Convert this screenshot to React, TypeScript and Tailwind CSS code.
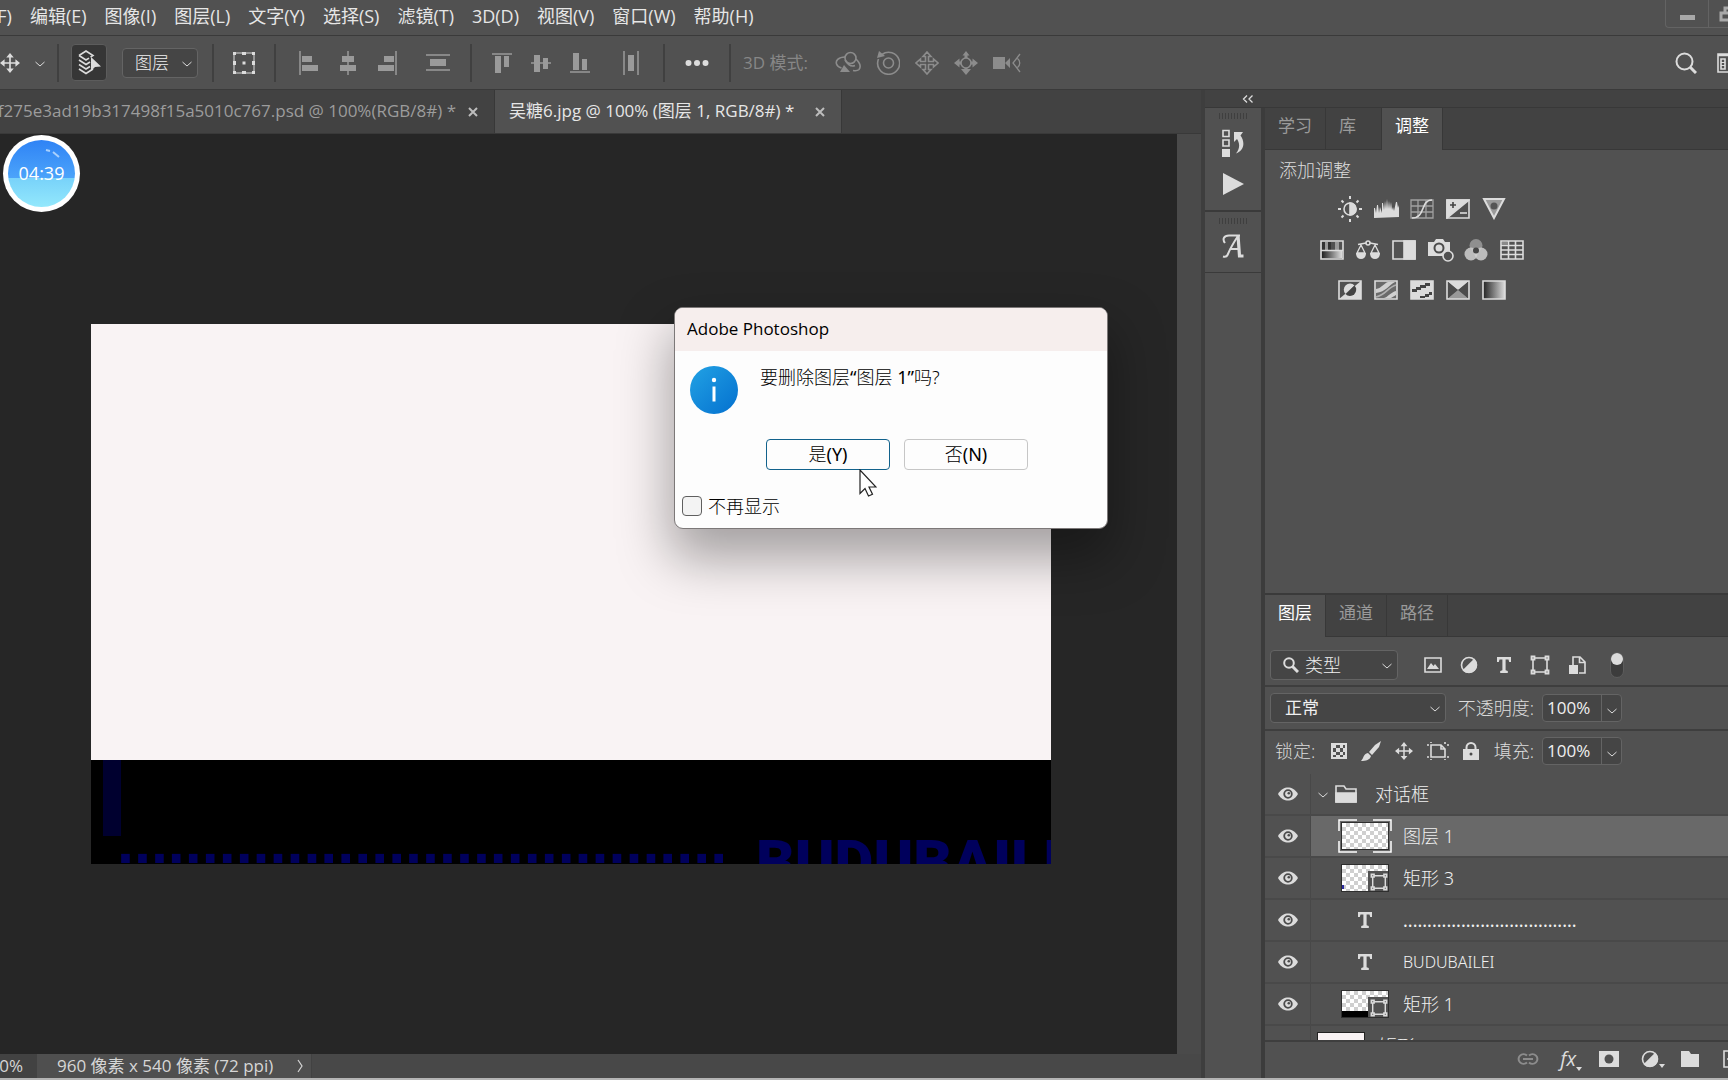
import React, { useState } from "react";

const menus = [
  "文件(F)",
  "编辑(E)",
  "图像(I)",
  "图层(L)",
  "文字(Y)",
  "选择(S)",
  "滤镜(T)",
  "3D(D)",
  "视图(V)",
  "窗口(W)",
  "帮助(H)",
];

type IconProps = { className?: string; children?: React.ReactNode; box?: string };

const Icon = ({ className = "w-6 h-6", children, box = "0 0 24 24" }: IconProps) => (
  <svg
    viewBox={box}
    className={`shrink-0 ${className}`}
    fill="none"
    stroke="currentColor"
    strokeWidth="1.6"
    aria-hidden="true"
  >
    {children}
  </svg>
);

const Chevron = () => (
  <Icon className="w-3 h-3 pointer-events-none" box="0 0 12 12">
    <path d="M1.5 5l4.5 4L10.5 5" strokeWidth="1" />
  </Icon>
);

const MoveIcon = ({ className = "w-6 h-6" }) => (
  <Icon className={className}>
    <path d="M12 4v16M4 12h16" strokeWidth="2" />
    <path
      d="M12 0l4.5 5.500h-9zM12 24l4.500-5.500h-9zM0 12l5.500-4.500v9zM24 12l-5.500-4.500v9z"
      fill="currentColor"
      stroke="none"
    />
  </Icon>
);

const ShapeIcon = ({ className = "w-5 h-5" }) => (
  <Icon className={className} box="0 0 20 20">
    <path d="M4.5 3h11M4.5 17h11M3 4.5v11M17 4.5v11" />
    <path d="M1.5 1.5h3v3h-3zM15.500 1.500h3v3h-3zM1.500 15.500h3v3h-3zM15.500 15.500h3v3h-3z" strokeWidth="1.8" />
  </Icon>
);

const TypeIcon = () => (
  <Icon className="w-4 h-4" box="0 0 16 16">
    <path
      d="M1 0h14v5h-1.800l-.7-2.600H9.600v10.900l2.200.7v2H4.200v-2l2.200-.7V2.400H3.500L2.800 5H1z"
      fill="currentColor"
      stroke="none"
    />
  </Icon>
);

const HalfCircle = () => (
  <Icon className="w-[18px] h-[18px]" box="0 0 18 18">
    <circle cx="9" cy="9" r="7.500" />
    <path d="M14.300 3.700A7.500 7.500 0 0 1 3.700 14.300z" fill="currentColor" />
  </Icon>
);

const EyeIcon = () => (
  <Icon className="w-5 h-3.5" box="0 0 20 14">
    <path
      d="M0 7C3 2 6.500 0.500 10 0.500S17 2 20 7c-3 5-6.500 6.500-10 6.500S3 12 0 7z"
      fill="#dcdcdc"
      stroke="none"
    />
    <circle cx="10" cy="7" r="3.800" stroke="#4b4b4b" strokeWidth="1.800" fill="#dcdcdc" />
    <circle cx="10.800" cy="6.300" r="1.300" fill="#4b4b4b" stroke="none" />
  </Icon>
);

const Sep = () => <div className="w-0.5 h-[38px] bg-[#404040] shrink-0" />;

const MenuBar = () => (
  <header className="h-9 shrink-0 flex justify-between border-b border-[#3a3a3a] overflow-hidden">
    <nav className="flex items-center gap-[18px] -ml-[44px] pb-0.5 text-[18px] text-[#e6e6e6] whitespace-nowrap">
      {menus.map((m) => (
        <button key={m}>{m}</button>
      ))}
    </nav>
    <div className="flex h-7 border border-t-0 border-r-0 border-[#636363] rounded-bl text-[#a8a8a8]">
      <button aria-label="最小化" className="w-[42px] flex items-end justify-center pb-[7px]">
        <span className="w-[15px] h-[5px] bg-[#a8a8a8]" />
      </button>
      <button aria-label="还原" className="w-5 border-l border-[#636363] pl-2.5 overflow-hidden">
        <Icon className="w-4 h-4" box="0 0 16 16">
          <path d="M6 6V2h9v7h-4M2 7h9v7H2z" strokeWidth="3" />
        </Icon>
      </button>
    </div>
  </header>
);

const OptionsBar = () => (
  <div className="h-[54px] shrink-0 flex items-center border-b border-[#3a3a3a] text-[#dcdcdc] overflow-hidden">
    <div className="w-[57px] shrink-0 flex items-center gap-3.5">
      <button aria-label="移动工具">
        <MoveIcon className="w-5 h-5" />
      </button>
      <Chevron />
    </div>
    <Sep />
    <button
      aria-label="自动选择"
      className="ml-3 w-9 h-[37px] shrink-0 rounded-sm bg-[#363636] border border-[#5c5c5c] flex items-center justify-center"
    >
      <Icon className="w-6 h-7" box="0 0 24 28">
        <path d="M2 6.500L9 2l7 4.500-2.500 1.600M2 6.500L9 11l3-1.900" />
        <path d="M2 11l7 4.500 4-2.500M2 15.500L9 20l4-2.500M2 20l7 4.500 7-4.500" />
        <path d="M14 8l10 9.500-6 .5-4 4z" fill="currentColor" stroke="none" />
      </Icon>
    </button>
    <div className="ml-[15px] w-[76px] h-[30px] shrink-0 flex items-center pl-3 pr-1 rounded-sm bg-[#454545] border border-[#646464]">
      <select aria-label="选择对象" className="flex-1 min-w-0 appearance-none bg-transparent text-[17px] font-light text-[#f0f0f0] outline-none">
        <option>图层</option>
        <option>组</option>
      </select>
      <Chevron />
    </div>
    <div className="w-3.5 shrink-0" />
    <Sep />
    <button aria-label="显示变换控件" className="mx-[17px]">
      <Icon className="w-[26px] h-[26px]" box="0 0 26 26">
        <path d="M3 3h20v20H3z" strokeWidth="1" />
        <path
          d="M2 2h3v3H2zM11 2h4v3h-4zM21 2h3v3h-3zM2 11h3v4H2zM21 11h3v4h-3zM2 21h3v3H2zM11 21h4v3h-4zM21 21h3v3h-3zM11.500 11.500h3v3h-3z"
          fill="currentColor"
          stroke="none"
        />
      </Icon>
    </button>
    <Sep />
    <div className="ml-[23px] flex items-center gap-[19px] text-[#9a9a9a]">
      <Icon className="w-5 h-6" box="0 0 20 24">
        <path d="M1 0v24" strokeWidth="1.500" />
        <path d="M3 5h10v6H3zM3 14h16v6H3z" fill="currentColor" stroke="none" />
      </Icon>
      <Icon className="w-5 h-6" box="0 0 20 24">
        <path d="M10 0v24" strokeWidth="1.500" />
        <path d="M4 5h12v6H4zM2 14h16v6H2z" fill="currentColor" stroke="none" />
      </Icon>
      <Icon className="w-5 h-6" box="0 0 20 24">
        <path d="M19 0v24" strokeWidth="1.500" />
        <path d="M7 5h10v6H7zM1 14h16v6H1z" fill="currentColor" stroke="none" />
      </Icon>
    </div>
    <Icon className="ml-[29px] mr-5 w-6 h-5 text-[#9a9a9a]" box="0 0 24 20">
      <path d="M0 2h24M0 17h24" strokeWidth="1.500" />
      <path d="M4 6h16v7H4z" fill="currentColor" stroke="none" />
    </Icon>
    <Sep />
    <div className="ml-5 flex items-center gap-[19px] text-[#9a9a9a]">
      <Icon className="w-5 h-6" box="0 0 20 24">
        <path d="M0 3h20" strokeWidth="1.500" />
        <path d="M3 5h6v17H3zM12 5h5v11h-5z" fill="currentColor" stroke="none" />
      </Icon>
      <Icon className="w-5 h-6" box="0 0 20 24">
        <path d="M0 12h20" strokeWidth="1.500" />
        <path d="M3 4h6v17H3zM12 7h5v11h-5z" fill="currentColor" stroke="none" />
      </Icon>
      <Icon className="w-5 h-6" box="0 0 20 24">
        <path d="M0 21h20" strokeWidth="1.500" />
        <path d="M3 2h6v17H3zM12 8h5v11h-5z" fill="currentColor" stroke="none" />
      </Icon>
    </div>
    <Icon className="ml-[31px] mr-[22px] w-5 h-6 text-[#9a9a9a]" box="0 0 20 24">
      <path d="M3 0v24M17 0v24" strokeWidth="1.500" />
      <path d="M7 4h6v16H7z" fill="currentColor" stroke="none" />
    </Icon>
    <Sep />
    <button aria-label="更多" className="mx-5">
      <Icon>
        <path d="M3.500 12h.01M12 12h.01M20.500 12h.01" strokeWidth="6" strokeLinecap="round" />
      </Icon>
    </button>
    <Sep />
    <span className="ml-3 w-[70px] shrink-0 text-[17px] text-[#878787] whitespace-nowrap">3D 模式:</span>
    <div className="ml-6 flex items-center gap-[15px] text-[#8c8c8c]">
      <Icon className="w-[26px] h-6 -ml-0.5" box="0 0 26 24">
        <circle cx="15.500" cy="7" r="5.500" />
        <path d="M10 6C3 6 .5 10 1.500 13c.8 2.500 3 3.500 5 4M21 8c4 4 5 8 3 10.500-1.500 1.500-3.500 1.500-6 1" />
        <path d="M10 9c3 5 6 7 10 5.500" />
        <path d="M9 14l6 7H5z" fill="currentColor" stroke="none" />
      </Icon>
      <Icon>
        <circle cx="12.500" cy="12" r="5" />
        <path d="M6 3.500A11 11 0 1 1 2.500 8" />
        <path d="M3 0l6 5-8 2z" fill="currentColor" stroke="none" />
      </Icon>
      <Icon>
        <path d="M12 1l4 4.500h-2.500v5h5V8l4.500 4-4.500 4v-2.500h-5v5H16L12 23l-4-4.500h2.500v-5h-5V16L1 12l4.500-4v2.500h5v-5H8z" />
      </Icon>
      <Icon>
        <circle cx="12" cy="12" r="5" />
        <path d="M12 3v4M3 12h4M17 12h4M12 17v4" strokeWidth="3" />
        <path d="M12 0l3.500 4.500h-7zM12 24l5-6H7zM0 12l5.500-4.500v9zM24 12l-5.500-4.500v9z" fill="currentColor" stroke="none" />
      </Icon>
      <Icon className="w-7 h-6" box="0 0 28 24">
        <path d="M0 6h12v12H0zM12 12l5-5v10z" fill="currentColor" stroke="none" />
        <path d="M27 3l-7 9 7 9M24.500 7.500c3 2 3 7 0 9" strokeWidth="1.300" />
      </Icon>
    </div>
    <div className="ml-auto flex items-center gap-5 overflow-hidden">
      <button aria-label="搜索">
        <Icon className="w-[22px] h-[22px]" box="0 0 22 22">
          <circle cx="9.500" cy="9.500" r="8" strokeWidth="2" />
          <path d="M15 15l6 6" strokeWidth="3" />
        </Icon>
      </button>
      <button aria-label="工作区" className="w-[11px] overflow-hidden">
        <Icon className="w-6 h-5" box="0 0 24 20">
          <path d="M1 1h22v18H1zM1 2.500h22M4 6h4v10H4z" />
          <path d="M4 9.500h4M4 12.500h4" strokeWidth="1" />
        </Icon>
      </button>
    </div>
  </div>
);

const DocTabs = () => (
  <div className="h-[44px] shrink-0 flex bg-[#424242] border-b border-[#393939] text-[17px] whitespace-nowrap">
    <div className="w-[495px] shrink-0 flex items-center justify-end gap-3 pr-4 pb-0.5 overflow-hidden text-[#9c9c9c] border-r border-[#383838]">
      <span>f275e3ad19b317498f15a5010c767.psd @ 100%(RGB/8#) *</span>
      <CloseTab />
    </div>
    <div className="w-[347px] shrink-0 flex items-center justify-between pl-3.5 pr-4 pb-0.5 bg-[#515151] text-[#e6e6e6] border-r border-[#383838]">
      <span>吴糖6.jpg @ 100% (图层 1, RGB/8#) *</span>
      <CloseTab />
    </div>
  </div>
);

const CloseTab = () => (
  <button aria-label="关闭" className="pt-0.5 text-[#bdbdbd]">
    <Icon className="w-2.5 h-2.5" box="0 0 10 10">
      <path d="M1 1l8 8M9 1l-8 8" strokeWidth="2" />
    </Icon>
  </button>
);

const Artboard = () => (
  <div className="relative w-[960px] h-[540px] bg-[#f9f3f4] overflow-hidden">
    <div className="absolute inset-x-0 bottom-0 h-[104px] bg-black overflow-hidden text-[#00005c]">
      <div className="absolute left-3 top-0 w-[18px] h-[76px] bg-[#00002f]" />
      <div className="absolute left-[26px] top-[47px] text-[61px] leading-[70px] font-bold font-['Liberation_Sans',sans-serif]">
        ....................................
      </div>
      <div className="absolute left-[665px] top-[67px] text-[60px] leading-[70px] font-black font-['Roboto',sans-serif]">
        BUDUBAILEI
      </div>
    </div>
  </div>
);

const Timer = () => (
  <div className="absolute left-[3px] top-px w-[77px] h-[77px] rounded-full bg-white p-[5px]">
    <div className="relative w-full h-full rounded-full flex items-center justify-center text-[18px] text-white bg-[linear-gradient(to_bottom,#2f83f5_0%,#4ba3fa_56%,#78d2fa_57%,#93e8fc_100%)]">
      04:39
      <svg viewBox="0 0 20 12" className="absolute right-3 top-2 w-5 h-3" fill="none" stroke="#a9d0fc" strokeWidth="2">
        <path d="M3 2l4 1M10 4l6 5" />
      </svg>
    </div>
  </div>
);

const Dialog = () => {
  const [hide, setHide] = useState(false);
  return (
    <div
      role="dialog"
      aria-labelledby="dialog-title"
      className="absolute left-[674px] top-[173px] w-[434px] rounded-[9px] border border-[#7c7878] bg-[#fdfdfd] text-black shadow-[0_26px_52px_4px_rgba(0,0,0,0.34)] overflow-clip"
    >
      <h1 id="dialog-title" className="h-[43px] pl-3 pb-0.5 flex items-center bg-[#f6eeed] text-[17px]">
        Adobe Photoshop
      </h1>
      <div className="h-[177px] flex flex-col font-['Noto_Sans','Noto_Sans_CJK_SC',sans-serif]">
        <div className="flex pl-[15px] pt-[15px] gap-[22px]">
          <Icon className="w-12 h-12" box="0 0 48 48">
            <defs>
              <linearGradient id="info" x1="0" y1="0" x2="1" y2="1">
                <stop offset="0" stopColor="#22a2e4" />
                <stop offset="1" stopColor="#0470cf" />
              </linearGradient>
            </defs>
            <circle cx="24" cy="24" r="24" fill="url(#info)" stroke="none" />
            <circle cx="24" cy="14" r="2.200" fill="#fff" stroke="none" />
            <path d="M24 20.500v15" stroke="#fff" strokeWidth="3" />
          </Icon>
          <p className="text-[18px] leading-[22px] font-light">
            要删除图层<b>“</b>图层 <b>1”</b>吗?
          </p>
        </div>
        <div className="flex gap-3.5 pl-[91px] mt-[25px] text-[18px]">
          <button className="w-[124px] h-[31px] flex items-center justify-center rounded-[4px] border border-[#12628c]">
            <span className="font-light">是</span>(Y)
          </button>
          <button className="w-[124px] h-[31px] flex items-center justify-center rounded-[4px] border border-[#c6c6c6]">
            <span className="font-light">否</span>(N)
          </button>
        </div>
        <label className="flex items-center gap-1.5 pl-[7px] mt-6 text-[18px] leading-6 font-light">
          <input
            type="checkbox"
            checked={hide}
            onChange={(e) => setHide(e.target.checked)}
            className="appearance-none w-5 h-5 rounded-[4px] border border-[#5f5f5f] bg-[#f3f3f3] checked:bg-[#12628c]"
          />
          不再显示
        </label>
      </div>
    </div>
  );
};

const Cursor = () => (
  <svg viewBox="0 0 18 28" className="absolute left-[859px] top-[335px] w-[18px] h-7" fill="#fff" stroke="#222" strokeWidth="1.200">
    <path d="M1 1v23.500l5-5 3.500 7.500 4-1.800-3.500-7.200h7z" />
  </svg>
);

const StatusBar = () => (
  <footer className="h-6 shrink-0 flex bg-[#484848] text-[17px] text-[#d6d6d6] whitespace-nowrap">
    <div className="w-[37px] flex items-center justify-end pr-3.5 bg-[#424242] overflow-hidden">100%</div>
    <div className="w-[275px] flex items-center justify-between pl-5 pr-1.5 bg-[#4f4f4f] border-r border-[#424242]">
      <span>960 像素 x 540 像素 (72 ppi)</span>
      <Icon className="w-3 h-4" box="0 0 12 16">
        <path d="M5 2l4 6-4 6" strokeWidth="1.200" />
      </Icon>
    </div>
  </footer>
);

const Grip = () => (
  <div className="mx-auto w-[29px] h-1.5 bg-[repeating-linear-gradient(to_right,#3f3f3f_0_1px,transparent_1px_3px)]" />
);

const IconStrip = () => (
  <aside className="w-[56px] shrink-0 flex flex-col bg-[#515151] text-[#dcdcdc]">
    <div className="h-[104px] flex flex-col items-center pt-[5px] border-b-2 border-[#3a3a3a]">
      <Grip />
      <button aria-label="历史记录" className="mt-2.5">
        <Icon className="w-6 h-7" box="0 0 24 28">
          <path d="M2 1.500h6v6H2zM2 11h6v6H2z" />
          <path d="M1 20h8v8H1z" fill="currentColor" stroke="none" />
          <path d="M13 3h9l-2.500 3.500c5 7 3.500 15-4.500 18 4-5 4-10 1-14.500L13 13z" fill="currentColor" stroke="none" />
        </Icon>
      </button>
      <button aria-label="动作" className="mt-4">
        <Icon className="w-[22px] h-[22px]" box="0 0 22 22">
          <path d="M1 0l21 11L1 22z" fill="currentColor" stroke="none" />
        </Icon>
      </button>
    </div>
    <div className="h-[61px] flex flex-col items-center pt-1.5 border-b border-[#3a3a3a]">
      <Grip />
      <button aria-label="字形" className="mt-2.5">
        <Icon className="w-[22px] h-6" box="0 0 22 24">
          <path d="M3 9C0 5 2 1.500 7 1.500h11" strokeWidth="2" />
          <path d="M16 1l1.500 21h4" strokeWidth="3.200" />
          <path d="M16 2C12 8 8 15 5.500 21c-.6 1.500-2.500 2-4.500 1.500M7.500 15H17" strokeWidth="2" />
        </Icon>
      </button>
    </div>
  </aside>
);

const frame = <path d="M1 1h22v18H1z" fill="none" />;

const Adjustments = () => (
  <section className="h-[485px] shrink-0 flex flex-col">
    <PanelTabs tabs={["学习", "库", "调整"]} active={2} />
    <p className="pl-3.5 pt-2 text-[18px] leading-6 font-light text-[#dcdcdc]">添加调整</p>
    <div className="mt-3.5 pl-[73px] flex items-center gap-3 h-[26px] text-[#dcdcdc]">
      <Icon className="w-6 h-[26px]" box="0 0 24 26">
        <circle cx="12" cy="13" r="6" />
        <path d="M12 7a6 6 0 0 1 0 12z" fill="currentColor" />
        <path d="M12 0v3M12 23v3M0 13h3M21 13h3M3.500 4.500l2 2M18.500 19.500l2 2M3.500 21.500l2-2M18.500 6.500l2-2" strokeWidth="2" />
      </Icon>
      <Icon className="w-[26px] h-5" box="0 0 26 20">
        <path
          d="M0 19V9h1l1 5 1-8h1l1 8 1-6 2 6 0-10h1l1 7 1-9 1 8 1-10 1 10 1-8 1 8 1-7 1 8 1-3 1 4 2-9h1l1 6 1-3v12z"
          fill="currentColor"
          stroke="none"
        />
      </Icon>
      <Icon className="w-6 h-5 -ml-0.5" box="0 0 24 20">
        <path d="M1 1h22v18H1zM8 1v18M16 1v18M1 7h22M1 13h22" stroke="#a0a0a0" strokeWidth="1.300" />
        <path d="M2 19C16 19 10 1 22 1" />
      </Icon>
      <Icon className="w-6 h-5" box="0 0 24 20">
        {frame}
        <path d="M1 1h22L1 19z" fill="currentColor" />
        <path d="M4 6h6M7 3v6" stroke="#444" />
        <path d="M14 14h7" />
      </Icon>
      <Icon className="w-6 h-[22px]" box="0 0 24 22">
        <path d="M2 1h20L12 20z" fill="#9a9a9a" strokeWidth="2" />
        <circle cx="12" cy="8" r="3.500" fill="#555" stroke="none" />
      </Icon>
    </div>
    <div className="mt-3.5 pl-[55px] flex items-center gap-3 h-7 text-[#dcdcdc]">
      <Icon className="w-6 h-5" box="0 0 24 20">
        <defs>
          <linearGradient id="bw">
            <stop offset="0" stopColor="#222" />
            <stop offset="1" stopColor="#ddd" />
          </linearGradient>
        </defs>
        <path d="M2 2h3v8H2zM8 2h3v8H8z" fill="#333" stroke="none" />
        <path d="M5 2h3v8H5zM15 2h4v8h-4z" fill="#999" stroke="none" />
        <path d="M2 11h20v7H2z" fill="url(#bw)" stroke="none" />
        <path d="M1 1h22v18H1zM1 10.500h22" />
      </Icon>
      <Icon className="w-6 h-5" box="0 0 24 20">
        <circle cx="12" cy="3" r="2" />
        <path d="M2 4.500L10 3M14 3l8 1.500M5 5L1 13h8zM19 5l-4 8h8z" strokeWidth="1.300" />
        <path d="M0 13h10c0 4-2 6-5 6s-5-2-5-6zM14 13h10c0 4-2 6-5 6s-5-2-5-6z" fill="currentColor" stroke="none" />
      </Icon>
      <Icon className="w-6 h-5" box="0 0 24 20">
        {frame}
        <path d="M12 1h11v18H12z" fill="currentColor" />
      </Icon>
      <Icon className="w-[26px] h-6" box="0 0 26 24">
        <path d="M0 4h6l2-3h7l2 3h5v14H0z" fill="currentColor" stroke="none" />
        <circle cx="11" cy="10" r="4.500" stroke="#4b4b4b" strokeWidth="2" />
        <circle cx="20" cy="18" r="5" fill="#515151" />
      </Icon>
      <Icon className="w-6 h-6 -ml-0.5">
        <circle cx="12" cy="7.500" r="6.500" fill="#8f8f8f" stroke="none" />
        <circle cx="7" cy="16" r="6.500" fill="#cfcfcf" fillOpacity=".85" stroke="none" />
        <circle cx="17" cy="16" r="6.500" fill="#cfcfcf" fillOpacity=".85" stroke="none" />
        <circle cx="12" cy="12.500" r="3" fill="#444" stroke="none" />
      </Icon>
      <Icon className="w-6 h-5" box="0 0 24 20">
        <path d="M1 1h22v18H1zM8.500 1v18M15.500 1v18M1 5.500h22M1 10h22M1 14.500h22" />
        <path d="M2 2h6v3H2z" fill="#8a8a8a" stroke="none" />
      </Icon>
    </div>
    <div className="mt-4 pl-[73px] flex items-center gap-3 h-5 text-[#dcdcdc]">
      <Icon className="w-6 h-5" box="0 0 24 20">
        {frame}
        <path d="M23 1v18H1z" fill="currentColor" stroke="none" />
        <path d="M16.500 5.500a6 6 0 0 0-9 8.500z" fill="currentColor" stroke="none" />
        <path d="M16.500 5.500a6 6 0 0 1-9 8.500z" fill="#444" stroke="none" />
      </Icon>
      <Icon className="w-6 h-5" box="0 0 24 20">
        <path d="M1 1h22v18H1z" fill="#6a6a6a" />
        <path d="M2 9C8 8 10 3 14 2h7C15 5 12 12 2 13zM10 18c4-1 7-6 12-7v4l-5 3z" fill="#d0d0d0" stroke="none" />
        <path d="M2 17C12 15 14 7 22 5" stroke="#b0b0b0" />
      </Icon>
      <Icon className="w-6 h-5" box="0 0 24 20">
        <path d="M1 1h22v18H1z" fill="currentColor" />
        <path d="M2 9h4V7h4V5h5V3h5v3h-4v2h-5v2H7v2H2zM10 16h5v-2h4v-2h3v3h-3v2h-4v1h-5z" fill="#444" stroke="none" />
      </Icon>
      <Icon className="w-6 h-5" box="0 0 24 20">
        <path d="M1 1h22L12 11z" fill="currentColor" stroke="none" />
        <path d="M1 19h22L12 9z" fill="#999" stroke="none" />
        <path d="M1 1l11 9L1 19z M23 1l-11 9 11 9z" fill="#4c4c4c" stroke="none" />
        {frame}
      </Icon>
      <Icon className="w-6 h-5" box="0 0 24 20">
        <path d="M1 1h22v18H1z" fill="url(#bw)" />
      </Icon>
    </div>
  </section>
);

const PanelTabs = ({ tabs, active }: { tabs: string[]; active: number }) => (
  <div className="h-[42px] shrink-0 flex bg-[#424242] text-[17px]">
    {tabs.map((t, i) => (
      <button
        key={t}
        className={`px-[13px] min-w-[56px] text-left pb-1.5 border-r border-[#383838] ${
          i === active ? "bg-[#515151] text-white" : "text-[#9a9a9a] border-b"
        }`}
      >
        {t}
      </button>
    ))}
    <div className="flex-1 border-b border-[#383838]" />
  </div>
);

const Percent = ({ id, label, width }: { id: string; label: string; width: string }) => (
  <>
    <label htmlFor={id} className={`${width} text-right pr-2 shrink-0 text-[18px] font-light text-[#dcdcdc]`}>
      {label}
    </label>
    <div className="flex w-[80px] h-7 shrink-0 bg-[#454545] border border-[#646464] rounded-sm">
      <input id={id} defaultValue="100%" className="w-[58px] pl-1 bg-transparent text-[17px] text-[#f0f0f0] outline-none" />
      <button aria-label={`${label}选项`} className="flex-1 flex items-center justify-center pt-1 border-l border-[#646464]">
        <Chevron />
      </button>
    </div>
  </>
);

const checker =
  "bg-white bg-[repeating-conic-gradient(#cfcfcf_0_25%,#ffffff_0_50%)] bg-[length:8px_8px]";

type LayerKind = "group" | "empty" | "shape" | "text" | "cut";

type Layer = { name: string; kind: LayerKind; fill?: string; text?: string };

const layers: Layer[] = [
  { name: "对话框", kind: "group" },
  { name: "图层 1", kind: "empty" },
  { name: "矩形 3", kind: "shape", fill: "left-0 bottom-0.5 w-0.5 h-1 bg-[#2a2a9c]" },
  { name: "....................................", kind: "text", text: "text-[18px]" },
  { name: "BUDUBAILEI", kind: "text", text: "text-[16px] font-light" },
  { name: "矩形 1", kind: "shape", fill: "left-0 bottom-0 w-full h-1.5 bg-black" },
  { name: "矩形", kind: "cut" },
];

const Thumb = ({ kind, fill }: { kind: LayerKind; fill?: string }) => {
  if (kind === "text") {
    return (
      <div className="w-12 flex justify-center">
        <TypeIcon />
      </div>
    );
  }
  if (kind === "cut") {
    return <div className="w-12 h-7 border border-[#222] bg-[#f9f3f4]" />;
  }
  return (
    <div className={`relative w-12 h-7 border border-[#2e2e2e] ${checker}`}>
      {fill && <div className={`absolute ${fill}`} />}
      {kind === "shape" && (
        <div className="absolute right-0 bottom-0 w-5 h-5 pl-0.5 pt-0.5 bg-[#515151]">
          <ShapeIcon className="w-[18px] h-[18px]" />
        </div>
      )}
      {kind === "empty" && (
        <svg viewBox="0 0 54 34" className="absolute -left-1 -top-1 w-[54px] h-[34px]" fill="none" stroke="#fff" strokeWidth="1.500">
          <path d="M1 12V1h18M35 1h18v11M53 22v11H35M19 33H1V22" />
        </svg>
      )}
    </div>
  );
};

const LayerRow = ({ name, kind, fill, text = "font-light" }: Layer) => (
  <li className="h-[42px] shrink-0 flex border-b-2 border-[#494949]">
    <div className="w-[46px] shrink-0 flex items-center justify-center border-r border-[#484848]">
      {kind !== "cut" && (
        <button aria-label="显示图层">
          <EyeIcon />
        </button>
      )}
    </div>
    {kind === "group" ? (
      <div className="flex-1 flex items-center pl-1.5 text-[#dcdcdc]">
        <Chevron />
        <Icon className="w-[22px] h-[18px] ml-1.5 mr-[18px]" box="0 0 22 18">
          <path d="M1 17V1h8l2 3h10v13z" />
          <path d="M1 8h20v9H1z" fill="currentColor" />
        </Icon>
        <span className="font-light text-[#f0f0f0]">{name}</span>
      </div>
    ) : (
      <div
        className={`flex-1 flex items-center text-[#dcdcdc] ${kind === "empty" ? "bg-[#696969]" : ""} ${
          kind === "cut" ? "pl-1.5" : "pl-[30px]"
        }`}
      >
        <Thumb kind={kind} fill={fill} />
        <span className={`ml-3.5 text-[#f0f0f0] whitespace-nowrap ${text}`}>{name}</span>
      </div>
    )}
  </li>
);

const LayersPanel = () => (
  <section className="flex-1 min-h-0 flex flex-col border-t-2 border-[#3a3a3a]">
    <PanelTabs tabs={["图层", "通道", "路径"]} active={0} />
    <div className="h-[50px] shrink-0 flex items-center pl-[5px] pb-0.5 pt-2.5 border-b-2 border-[#3e3e3e] text-[#dcdcdc]">
      <div className="w-[128px] h-[30px] shrink-0 flex items-center pl-3 pr-1 gap-1.5 rounded-sm bg-[#454545] border border-[#646464]">
        <Icon className="w-4 h-4" box="0 0 16 16">
          <circle cx="6" cy="6" r="4.800" strokeWidth="2" />
          <path d="M9.500 9.500l5.500 5.500" strokeWidth="3" />
        </Icon>
        <select aria-label="滤镜类型" className="flex-1 min-w-0 appearance-none bg-transparent text-[18px] font-light text-[#f0f0f0] outline-none">
          <option>类型</option>
          <option>名称</option>
        </select>
        <Chevron />
      </div>
      <div className="ml-[26px] flex items-center gap-[18px]">
        <Icon className="w-[18px] h-4" box="0 0 18 16">
          <path d="M1 1h16v14H1z" />
          <path d="M3 12l4-6 2.500 3L11 7l4 5z" fill="currentColor" stroke="none" />
        </Icon>
        <HalfCircle />
        <TypeIcon />
        <ShapeIcon className="w-5 h-5" />
        <Icon className="w-[18px] h-[18px]" box="0 0 18 18">
          <path d="M5 9V1h7l5 5v11h-6M11.500 1v5.500H17" />
          <path d="M1 9h9v9H1z" fill="currentColor" stroke="none" />
        </Icon>
      </div>
      <button
        aria-label="打开图层过滤"
        className="ml-6 w-3.5 h-[26px] flex items-start justify-center rounded-full bg-[#3c3c3c] border border-[#5c5c5c]"
      >
        <span className="w-3 h-3 rounded-full bg-[#dcdcdc]" />
      </button>
    </div>
    <div className="h-[44px] shrink-0 flex items-center pl-[5px] border-b-2 border-[#3e3e3e] text-[#dcdcdc]">
      <div className="w-[176px] h-[30px] shrink-0 flex items-center pl-3.5 pr-1 rounded-sm bg-[#454545] border border-[#646464]">
        <select aria-label="混合模式" className="flex-1 min-w-0 appearance-none bg-transparent text-[17px] text-[#f0f0f0] outline-none">
          <option>正常</option>
          <option>正片叠底</option>
        </select>
        <Chevron />
      </div>
      <div className="w-2.5 shrink-0" />
      <Percent id="opacity" label="不透明度:" width="w-[86px]" />
    </div>
    <div className="h-[43px] shrink-0 flex items-center pl-2.5 pb-[3px] text-[#dcdcdc]">
      <span className="w-[56px] shrink-0 text-[18px] font-light">锁定:</span>
      <div className="flex items-center w-[148px] shrink-0 justify-between">
        <Icon className="w-4 h-4" box="0 0 16 16">
          <path d="M1 1h14v14H1z" strokeWidth="2" />
          <path d="M1 1h4v4H1zM9 1h3v4H9zM5 5h4v4H5zM12 5h3v4h-3zM1 9h4v3H1zM9 9h3v3H9zM5 12h4v3H5zM12 12h3v3h-3z" fill="currentColor" stroke="none" />
        </Icon>
        <Icon className="w-5 h-5" box="0 0 20 20">
          <path d="M20 0l-2 6-7 8-3-3 6-7zM7 12l3 3c-1 4-5 5-10 5 3-3 2-7 7-8z" fill="currentColor" stroke="none" />
        </Icon>
        <MoveIcon className="w-[18px] h-[18px]" />
        <Icon className="w-[22px] h-[18px]" box="0 0 22 18">
          <path d="M4 3h10l4 4v8H4zM14 3v4h4" />
          <path d="M4 0v1M18 0v2M4 17v1M18 17v1M0 3h2M20 3h2M0 15h2M20 15h2" />
        </Icon>
        <Icon className="w-4 h-[18px]" box="0 0 16 18">
          <path d="M3.500 8V5.500a4.500 4.500 0 0 1 9 0V8" strokeWidth="2" />
          <path d="M0 7h16v11H0z" fill="currentColor" stroke="none" />
          <circle cx="8" cy="12" r="1.500" fill="#4b4b4b" stroke="none" />
        </Icon>
      </div>
      <Percent id="fill" label="填充:" width="w-[63px]" />
    </div>
    <ul className="flex-1 min-h-0 flex flex-col overflow-hidden text-[18px] font-['Noto_Sans','Noto_Sans_CJK_SC',sans-serif]">
      {layers.map((l) => (
        <LayerRow key={l.name} {...l} />
      ))}
    </ul>
    <div className="h-[38px] shrink-0 flex items-center justify-end border-t-2 border-[#3e3e3e] pb-0.5 text-[#dcdcdc] overflow-hidden">
      <Icon className="w-[22px] h-3 mr-[21px] text-[#8c8c8c]" box="0 0 22 12">
        <path d="M10 9.500A5 4.800 0 1 1 10 2.500M12 2.500a5 4.800 0 1 1 0 7M6 6h10" strokeWidth="2" />
      </Icon>
      <button className="flex items-end mr-[17px] text-[20px] leading-6 italic font-['Open_Sans',sans-serif]">
        fx
        <Arrow />
      </button>
      <Icon className="w-5 h-4 mr-[22px]" box="0 0 20 16">
        <path d="M0 0h20v16H0z" fill="currentColor" stroke="none" />
        <circle cx="10" cy="8" r="4.500" fill="#515151" stroke="none" />
      </Icon>
      <button aria-label="新建调整图层" className="flex items-end mr-4">
        <HalfCircle />
        <Arrow />
      </button>
      <Icon className="w-[18px] h-4 mr-6" box="0 0 18 16">
        <path d="M0 0h8l2 3h8v13H0z" fill="currentColor" stroke="none" />
      </Icon>
      <div className="w-[5px] overflow-hidden">
        <Icon className="w-[18px] h-[18px]" box="0 0 18 18">
          <path d="M1 1h16v16H1zM4 9h10M9 4v10" />
        </Icon>
      </div>
    </div>
  </section>
);

const Arrow = () => (
  <svg viewBox="0 0 6 4" className="w-1.5 h-1" fill="currentColor" aria-hidden="true">
    <path d="M0 0h6L3 4z" />
  </svg>
);

export default function App() {
  return (
    <div className="h-screen flex flex-col overflow-hidden bg-[#515151] border-b-2 border-[#b4b4b4] font-['Open_Sans','Noto_Sans_CJK_SC',sans-serif]">
      <MenuBar />
      <OptionsBar />
      <div className="flex-1 min-h-0 flex">
        <main className="flex-1 min-w-0 flex flex-col">
          <DocTabs />
          <div className="flex-1 min-h-0 flex">
            <div className="relative flex-1 min-w-0 bg-[#262626] pl-[91px] pt-[190px]">
              <Artboard />
              <Timer />
              <Dialog />
              <Cursor />
            </div>
            <div className="w-6 shrink-0 bg-[#4a4a4a]" />
          </div>
          <StatusBar />
        </main>
        <div className="w-[527px] shrink-0 flex flex-col border-l-4 border-[#3e3e3e]">
          <div className="h-[17px] shrink-0 bg-[#424242] text-[#dcdcdc] pl-[37px] flex items-center">
            <button aria-label="展开面板">
              <Icon className="w-3 h-2" box="0 0 12 8">
                <path d="M5 .5L1.500 4 5 7.500M10.500.5L7 4l3.500 3.500" strokeWidth="1.300" />
              </Icon>
            </button>
          </div>
          <div className="flex-1 min-h-0 flex border-t border-[#383838]">
            <IconStrip />
            <div className="flex-1 min-w-0 flex flex-col border-l-4 border-[#3c3c3c]">
              <Adjustments />
              <LayersPanel />
            </div>
          </div>
        </div>
      </div>
    </div>
  );
}
